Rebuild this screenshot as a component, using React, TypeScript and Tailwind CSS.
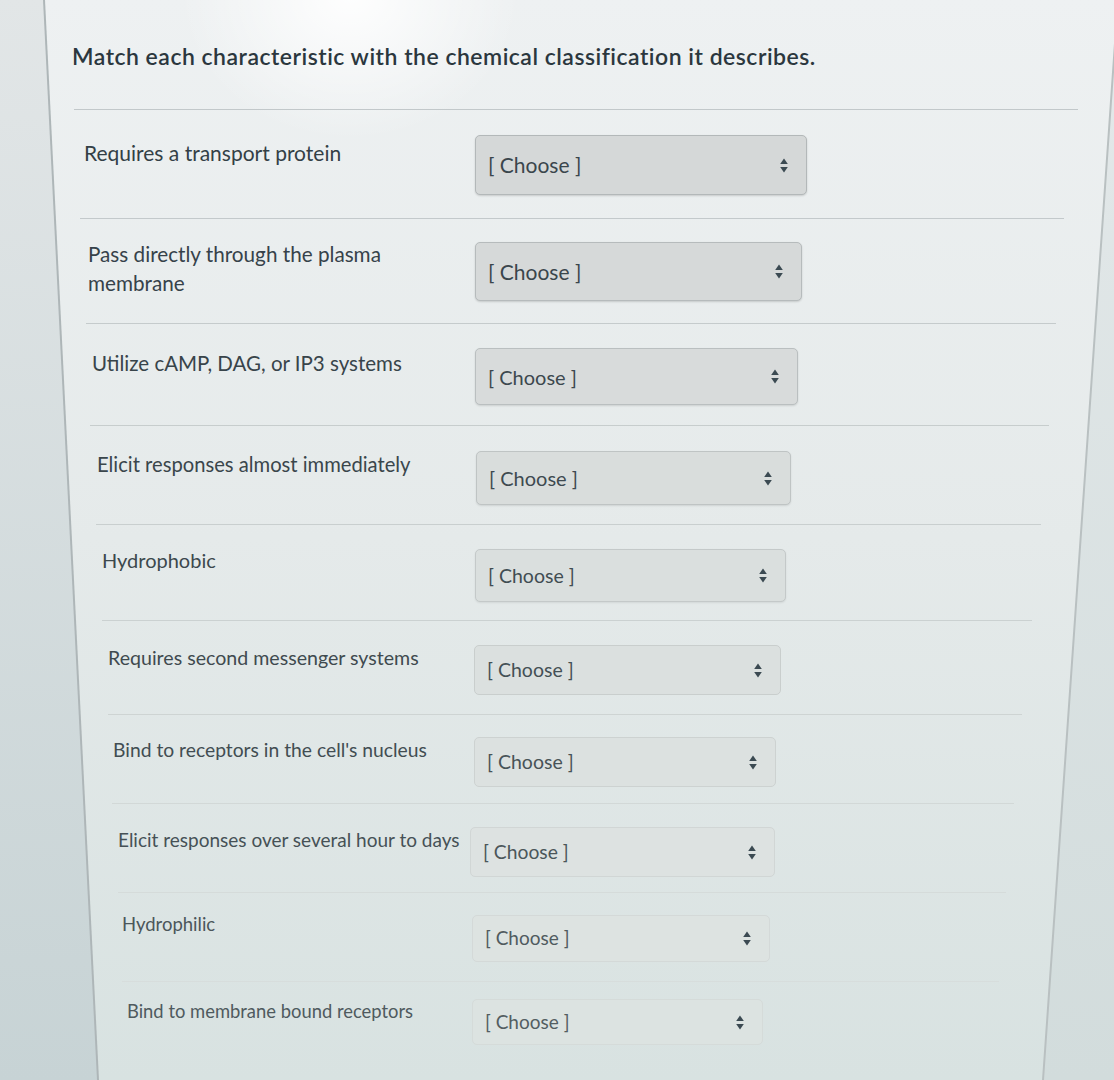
import React from "react";

type Row = {
  label: string;
  box: string;
  lab: string;
  sel: string;
  tone: string;
};

const rows: Row[] = [
  {
    label: "Requires a transport protein",
    box: "ml-[74px] mr-[36px] h-[109px] pt-[25px] border-[#c2c8ca]",
    lab: "w-[401px] pl-[10px] pr-[40px] mt-[3px] text-[21px] text-[#333f46]",
    sel: "w-[332px] h-[60px] text-[21px]",
    tone: "bg-[#d5d8d8] border-[#b3b8b9] text-[#3a464c] shadow-[0_1px_2px_rgba(0,0,0,0.15)]",
  },
  {
    label: "Pass directly through the plasma membrane",
    box: "ml-[80px] mr-[50px] h-[105px] pt-[23px] border-[#c3c9cb]",
    lab: "w-[395px] pl-[8px] pr-[60px] -mt-[2px] text-[20.7px] text-[#36424a]",
    sel: "w-[327px] h-[59px] text-[21px]",
    tone: "bg-[#d6d9d9] border-[#b6bbbc] text-[#3a464c] shadow-[0_1px_2px_rgba(0,0,0,0.15)]",
  },
  {
    label: "Utilize cAMP, DAG, or IP3 systems",
    box: "ml-[86px] mr-[58px] h-[102px] pt-[24px] border-[#c5cbcc]",
    lab: "w-[389px] pl-[6px] pr-[10px] mt-[1px] text-[20.5px] text-[#38444a]",
    sel: "w-[323px] h-[57px] text-[20px]",
    tone: "bg-[#d8dbdb] border-[#babfc0] text-[#3c484e] shadow-[0_1px_2px_rgba(0,0,0,0.12)]",
  },
  {
    label: "Elicit responses almost immediately",
    box: "ml-[90px] mr-[65px] h-[99px] pt-[25px] border-[#c7cdcd]",
    lab: "w-[386px] pl-[7px] pr-[10px] -mt-[1px] text-[20.2px] text-[#3a464b]",
    sel: "w-[315px] h-[54px] text-[20px]",
    tone: "bg-[#d9dddc] border-[#bfc4c4] text-[#3e4a50] shadow-[0_1px_2px_rgba(0,0,0,0.1)]",
  },
  {
    label: "Hydrophobic",
    box: "ml-[96px] mr-[73px] h-[96px] pt-[24px] border-[#c9cfcf]",
    lab: "w-[379px] pl-[6px] pr-[10px] -mt-[3px] text-[20px] text-[#3c484d]",
    sel: "w-[311px] h-[53px] text-[19.5px]",
    tone: "bg-[#dadfde] border-[#c4c9c9] text-[#414d52] shadow-[0_1px_2px_rgba(0,0,0,0.08)]",
  },
  {
    label: "Requires second messenger systems",
    box: "ml-[102px] mr-[82px] h-[94px] pt-[24px] border-[#cbd1d1]",
    lab: "w-[372px] pl-[6px] pr-[4px] -mt-[2px] text-[19.6px] text-[#3f4a4f]",
    sel: "w-[307px] h-[50px] text-[19.5px]",
    tone: "bg-[#dbe0df] border-[#c9cecd] text-[#445055]",
  },
  {
    label: "Bind to receptors in the cell's nucleus",
    box: "ml-[108px] mr-[92px] h-[89px] pt-[22px] border-[#ced4d3]",
    lab: "w-[366px] pl-[5px] pr-[2px] -mt-[2px] text-[19.3px] text-[#424d52]",
    sel: "w-[302px] h-[50px] text-[19.5px]",
    tone: "bg-[#dce1e0] border-[#cdd2d1] text-[#485357]",
  },
  {
    label: "Elicit responses over several hour to days",
    box: "ml-[112px] mr-[100px] h-[89px] pt-[23px] border-[#d2d8d7]",
    lab: "w-[358px] pl-[6px] pr-0 -mt-[2px] text-[19px] text-[#465156] whitespace-nowrap",
    sel: "w-[305px] h-[50px] text-[19.3px]",
    tone: "bg-[#dde2e1] border-[#d1d6d5] text-[#4b565a]",
  },
  {
    label: "Hydrophilic",
    box: "ml-[118px] mr-[108px] h-[89px] pt-[22px] border-[#d5dbda]",
    lab: "w-[354px] pl-[4px] pr-[6px] -mt-[5px] text-[18.5px] text-[#4b565a]",
    sel: "w-[298px] h-[47px] text-[19px]",
    tone: "bg-[#dde3e1] border-[#d4d9d8] text-[#505b5f]",
  },
  {
    label: "Bind to membrane bound receptors",
    box: "ml-[122px] mr-[115px] h-[98px] pt-[17px] border-[#d7dddc]",
    lab: "w-[350px] pl-[5px] pr-[6px] -mt-[2px] text-[18.4px] text-[#4f5a5e]",
    sel: "w-[291px] h-[46px] text-[19px]",
    tone: "bg-[#dce3e1] border-[#d5dbd9] text-[#535e62]",
  },
];

function UpDown() {
  return (
    <svg width="8" height="15" viewBox="0 0 8 15" aria-hidden="true">
      <path d="M4 0.5 L7.8 6 H0.2 Z" fill="#3b4a52" />
      <path d="M4 14.5 L7.8 9 H0.2 Z" fill="#3b4a52" />
    </svg>
  );
}

export default function App() {
  return (
    <div className="relative h-[1080px] w-[1114px] overflow-hidden bg-gradient-to-b from-[#eef1f2] via-[#e5eaea] to-[#d8e2e1] font-['Lato','Noto_Sans',sans-serif]">
      {/* screen glare and the darker page gutters outside the quiz panel */}
      <div className="pointer-events-none absolute -top-[150px] left-[180px] h-[290px] w-[340px] rounded-full bg-[radial-gradient(closest-side,rgba(255,255,255,0.95),rgba(255,255,255,0))]" />
      <div className="pointer-events-none absolute inset-0 bg-[#aeb6b8] [clip-path:polygon(0_0,45px_0,99px_100%,0_100%)]" />
      <div className="pointer-events-none absolute inset-0 bg-gradient-to-b from-[#e2e6e7] to-[#c7d3d5] [clip-path:polygon(0_0,43px_0,97px_100%,0_100%)]" />
      <div className="pointer-events-none absolute inset-0 bg-[#b9c0c1] [clip-path:polygon(1117px_0,100%_0,100%_100%,1042px_100%)]" />
      <div className="pointer-events-none absolute inset-0 bg-gradient-to-b from-[#e4e9ea] to-[#d2dcdc] [clip-path:polygon(1119px_0,100%_0,100%_100%,1044px_100%)]" />

      <div className="relative pt-[41px]">
        <h1 className="whitespace-nowrap pl-[72px] text-[23px] font-semibold leading-[30px] tracking-[0.5px] text-[#2b373e]">
          Match each characteristic with the chemical classification it describes.
        </h1>

        <div className="mt-[38px]">
          {rows.map((r) => (
            <div key={r.label} className={`flex items-start border-t ${r.box}`}>
              <div className={`shrink-0 leading-[29px] ${r.lab}`}>{r.label}</div>
              <div
                className={`flex shrink-0 items-center justify-between rounded-[5px] border pl-[12px] pr-[18px] ${r.sel} ${r.tone}`}
              >
                <span>[ Choose ]</span>
                <UpDown />
              </div>
            </div>
          ))}
        </div>
      </div>
    </div>
  );
}
